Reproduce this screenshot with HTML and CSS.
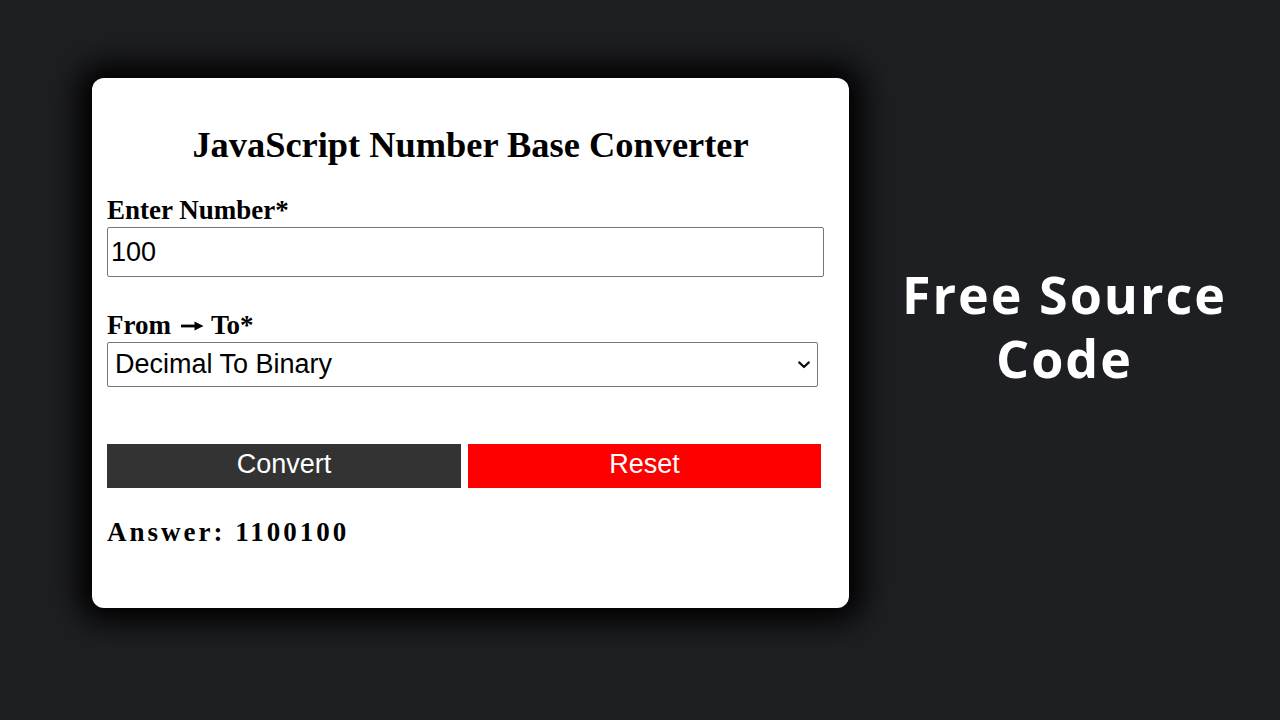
FILE: index.html
```html
<!DOCTYPE html>
<html lang="en">
<head>
<meta charset="utf-8">
<title>JavaScript Number Base Converter</title>
<link rel="stylesheet" href="styles.css">
</head>
<body>
<main class="page">
  <section class="card">
    <h2 class="title">JavaScript Number Base Converter</h2>
    <label class="label" for="num">Enter Number*</label>
    <input class="field" id="num" type="text" value="100">
    <label class="label label-from" for="base">From <svg class="arrow" width="23" height="10" viewBox="0 0 23 10" aria-hidden="true"><rect x="0" y="3.6" width="16" height="2.8" fill="#000"/><path d="M13.5 0.6 L22.5 5 L13.5 9.4 Z" fill="#000"/></svg> To*</label>
    <div class="select-wrap">
      <select class="select" id="base">
        <option>Decimal To Binary</option>
        <option>Decimal To Octal</option>
        <option>Decimal To Hexadecimal</option>
        <option>Binary To Decimal</option>
      </select>
      <svg class="chevron" width="12" height="8" viewBox="0 0 12 8" aria-hidden="true"><path d="M1.2 1.4 L6 6 L10.8 1.4" fill="none" stroke="#111" stroke-width="2.2" stroke-linecap="round" stroke-linejoin="round"/></svg>
    </div>
    <div class="buttons">
      <button class="btn btn-convert" type="button">Convert</button>
      <button class="btn btn-reset" type="button">Reset</button>
    </div>
    <p class="answer">Answer: 1100100</p>
  </section>
  <aside class="promo">
    <p class="promo-text">Free Source<br>Code</p>
  </aside>
</main>
</body>
</html>
```

FILE: styles.css
```css
html, body {
  margin: 0;
  padding: 0;
}

body {
  background: #1e1f23;
  width: 1280px;
  height: 720px;
  overflow: hidden;
}

.page {
  display: flex;
  align-items: flex-start;
  padding: 78px 0 0 92px;
}

.card {
  width: 757px;
  height: 530px;
  box-sizing: border-box;
  background: #fff;
  border-radius: 12px;
  box-shadow: 0 0 30px 14px #000;
  padding: 47px 15px 0 15px;
  display: flex;
  flex-direction: column;
  align-items: flex-start;
  font-family: "Liberation Serif", "Times New Roman", serif;
  color: #000;
}

.title {
  align-self: stretch;
  margin: 0;
  text-align: center;
  font-size: 36.4px;
  line-height: 40px;
  font-weight: 700;
}

.label {
  display: block;
  margin-top: 30px;
  font-size: 27px;
  line-height: 30px;
  height: 30px;
  font-weight: 700;
}

.label-from {
  margin-top: 33px;
}

.arrow {
  vertical-align: 3px;
  margin: 0 1px 0 3px;
}

.field {
  margin-top: 2px;
  width: 717px;
  height: 50px;
  box-sizing: border-box;
  border: 1px solid #767676;
  border-radius: 2px;
  padding: 0 3px;
  font-family: "Liberation Sans", Arial, sans-serif;
  font-size: 27px;
  color: #000;
  background: #fff;
  outline: none;
}

.select-wrap {
  position: relative;
  margin-top: 2px;
  width: 711px;
  height: 45px;
}

.select {
  appearance: none;
  -webkit-appearance: none;
  width: 100%;
  height: 100%;
  box-sizing: border-box;
  border: 1px solid #767676;
  border-radius: 2px;
  padding: 0 30px 2px 7px;
  font-family: "Liberation Sans", Arial, sans-serif;
  font-size: 27px;
  color: #000;
  background: #fff;
  outline: none;
}

.chevron {
  position: absolute;
  right: 8px;
  top: 19px;
  pointer-events: none;
}

.buttons {
  margin-top: 57px;
  display: grid;
  grid-template-columns: 354px 353px;
  column-gap: 7px;
}

.btn {
  height: 44px;
  border: none;
  border-radius: 0;
  margin: 0;
  padding: 0 0 4px 0;
  font-family: "Liberation Sans", Arial, sans-serif;
  font-size: 27px;
  color: #fff;
  cursor: pointer;
}

.btn-convert {
  background: #333333;
}

.btn-reset {
  background: #ff0000;
}

.answer {
  margin: 29px 0 0 0;
  font-size: 27px;
  line-height: 30px;
  font-weight: 700;
  letter-spacing: 3px;
}

.promo {
  flex: 1;
  display: flex;
  justify-content: center;
  padding-top: 184px;
}

.promo-text {
  margin: 0;
  text-align: center;
  font-family: "Open Sans", "Liberation Sans", sans-serif;
  font-weight: 700;
  font-size: 52px;
  line-height: 64px;
  letter-spacing: 2px;
  color: #fff;
}
```
